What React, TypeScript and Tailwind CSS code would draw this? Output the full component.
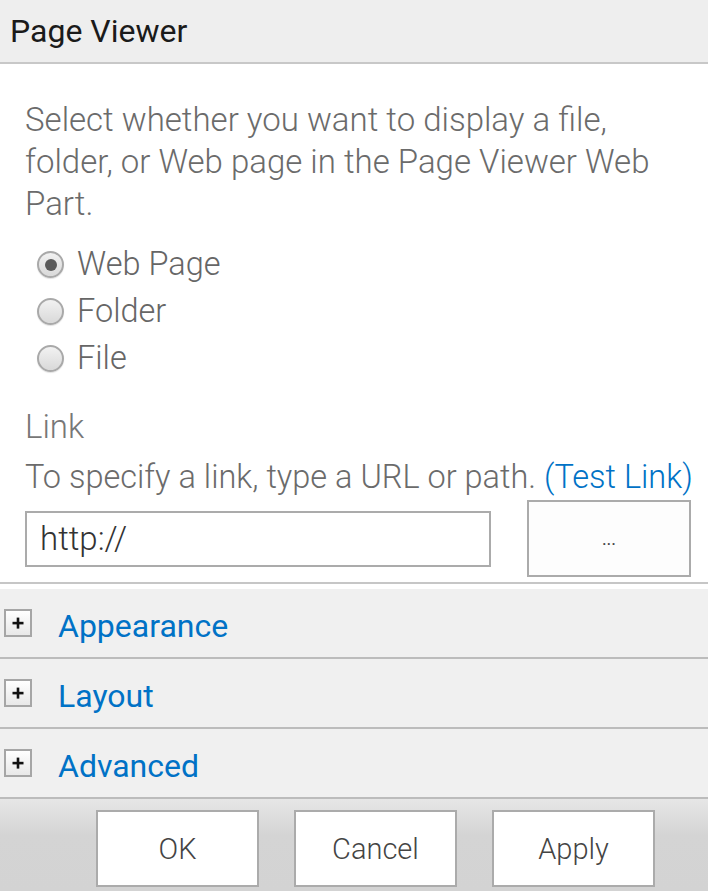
import React from "react";

function Radio({ checked, label }: { checked?: boolean; label: string }) {
  return (
    <div className="flex h-[47px] items-center">
      <div className="ml-[12px] flex h-[27px] w-[27px] items-center justify-center rounded-full border-2 border-[#a9a9a9] bg-gradient-to-b from-[#f2f2f2] to-[#d9d9d9] shadow-[0_1px_1px_rgba(0,0,0,0.12)]">
        {checked && <div className="h-[12px] w-[12px] rounded-full bg-[#5a5a5a]" />}
      </div>
      <span className="ml-[13px] text-[32.5px] leading-[47px] text-[#666666] font-light">{label}</span>
    </div>
  );
}

function Section({ label }: { label: string }) {
  return (
    <div className="flex h-[70px] items-center border-b-2 border-[#bcbcbc] bg-[#f0f0f0]">
      <div className="ml-[4px] flex h-[28px] w-[28px] items-center justify-center border-2 border-[#a6a6a6] bg-gradient-to-b from-[#ffffff] to-[#e8e8e8]">
        <svg width="14" height="14" viewBox="0 0 14 14">
          <rect x="1.5" y="5.8" width="11" height="2.6" fill="#111" />
          <rect x="5.7" y="1.6" width="2.6" height="11" fill="#111" />
        </svg>
      </div>
      <span className="ml-[26px] mt-[6px] text-[32px] leading-none text-[#0072c6]">{label}</span>
    </div>
  );
}

function FooterButton({ label }: { label: string }) {
  return (
    <button className="flex h-[77px] w-[163px] shrink-0 items-center justify-center border-2 border-[#ababab] bg-white pt-[2px] text-[29px] text-[#444444] font-light">
      {label}
    </button>
  );
}

export default function App() {
  return (
    <div className="flex h-[891px] w-[708px] flex-col overflow-hidden bg-white font-['Roboto','Liberation_Sans',sans-serif]">
      <div className="flex h-[64px] shrink-0 items-center border-b-2 border-[#c8c8c8] bg-[#eeeeee] px-[10px]">
        <span className="text-[32px] leading-none text-[#1a1a1a]">Page Viewer</span>
      </div>

      <div className="pl-[25px] pt-[35px]">
        <p className="text-[33px] leading-[42px] text-[#6b6b6b] font-light">
          Select whether you want to display a file,
          <br />
          folder, or Web page in the Page Viewer Web
          <br />
          Part.
        </p>

        <div className="mt-[16px] flex flex-col">
          <Radio checked label="Web Page" />
          <Radio label="Folder" />
          <Radio label="File" />
        </div>

        <div className="mt-[24px] text-[33px] leading-[42px] text-[#777777] font-light">Link</div>
        <div className="mt-[8px] whitespace-nowrap text-[32.5px] leading-[42px] text-[#6b6b6b] font-light">
          To specify a link, type a URL or path. <span className="text-[#0072c6]">(Test Link)</span>
        </div>

        <div className="mt-[2px] flex items-center gap-[36px]">
          <div className="flex h-[56px] w-[466px] shrink-0 items-center border-2 border-[#ababab] bg-white px-[13px] text-[33px] text-[#333333] font-light">
            http://
          </div>
          <button className="flex h-[77px] w-[164px] shrink-0 items-center justify-center border-2 border-[#ababab] bg-[#fdfdfd] text-[18px] text-[#444444]">
            ...
          </button>
        </div>
      </div>

      <div className="mt-[5px] h-[2px] shrink-0 bg-[#c6c6c6]" />
      <div className="mt-[5px] flex flex-col">
        <Section label="Appearance" />
        <Section label="Layout" />
        <Section label="Advanced" />
      </div>

      <div className="flex flex-1 items-start gap-[35px] bg-gradient-to-b from-[#e6e6e6] via-[#d4d4d4] via-40% to-[#d3d3d3] pl-[96px] pt-[11px]">
        <FooterButton label="OK" />
        <FooterButton label="Cancel" />
        <FooterButton label="Apply" />
      </div>
    </div>
  );
}
